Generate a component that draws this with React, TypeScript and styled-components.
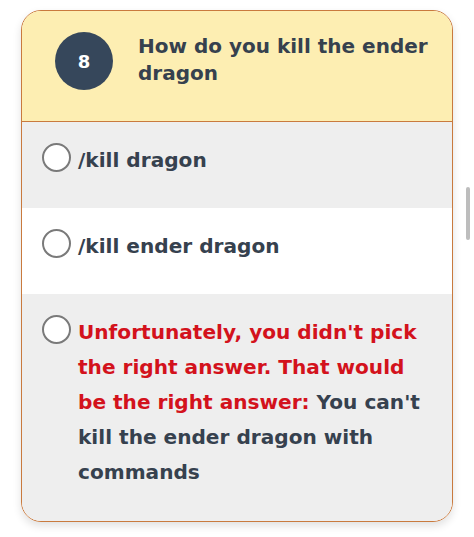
import { createGlobalStyle, styled } from 'styled-components'

const GlobalStyle = createGlobalStyle`
  body {
    margin: 0;
    background: #fff;
    font-family: 'DejaVu Sans', Verdana, sans-serif;
  }
`

const options = [
  { id: 1, label: '/kill dragon', shade: true },
  { id: 2, label: '/kill ender dragon', shade: false },
]

export default function App() {
  return (
    <>
      <GlobalStyle />
      <Page>
        <Card>
          <Header>
            <Badge>8</Badge>
            <Title>How do you kill the ender dragon</Title>
          </Header>
          {options.map((o) => (
            <Option key={o.id} $shade={o.shade}>
              <Radio />
              <Label>{o.label}</Label>
            </Option>
          ))}
          <Option $shade $last>
            <Radio />
            <Label>
              <Wrong>
                Unfortunately, you didn't pick the right answer. That would be the right answer:
              </Wrong>{' '}
              You can't kill the ender dragon with commands
            </Label>
          </Option>
        </Card>
        <Scroll />
      </Page>
    </>
  )
}

const Page = styled.div`
  position: relative;
  height: 537px;
  padding: 10px 0 0 21px;
  box-sizing: border-box;
`

const Card = styled.div`
  width: 432px;
  box-sizing: border-box;
  border: 1.5px solid #c97a3e;
  border-radius: 20px;
  overflow: hidden;
  box-shadow: 0 4px 8px rgba(0, 0, 0, 0.12);
`

const Header = styled.div`
  display: flex;
  align-items: flex-start;
  gap: 25px;
  height: 111px;
  box-sizing: border-box;
  padding: 21px 20px 0 33px;
  background: #fdeeb2;
  border-bottom: 1.5px solid #c97a3e;
`

const Badge = styled.div`
  flex: none;
  width: 58px;
  height: 58px;
  border-radius: 50%;
  background: #36475b;
  color: #fff;
  font-size: 18px;
  font-weight: bold;
  display: flex;
  align-items: center;
  justify-content: center;
`

const Title = styled.div`
  font-size: 20px;
  font-weight: bold;
  line-height: 27px;
  color: #36414e;
  margin-top: 1px;
`

const Option = styled.div<{ $shade?: boolean; $last?: boolean }>`
  display: flex;
  align-items: flex-start;
  gap: 7px;
  padding: 21px 20px ${(p) => (p.$last ? '31px' : '30px')} 20px;
  background: ${(p) => (p.$shade ? '#eeeeee' : '#ffffff')};
`

const Radio = styled.span`
  flex: none;
  width: 29px;
  height: 29px;
  box-sizing: border-box;
  border: 2px solid #7a7a7a;
  border-radius: 50%;
  background: #fff;
`

const Label = styled.div`
  font-size: 20.1px;
  font-weight: bold;
  line-height: 35px;
  color: #36414e;
`

const Wrong = styled.span`
  color: #d3121c;
`

const Scroll = styled.div`
  position: absolute;
  left: 466px;
  top: 187px;
  width: 4px;
  height: 53px;
  border-radius: 2px;
  background: #bdbdbd;
`
